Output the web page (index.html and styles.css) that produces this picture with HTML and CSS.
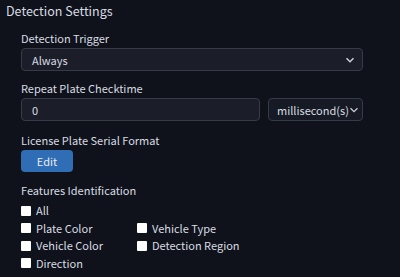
FILE: index.html
```html
<!DOCTYPE html>
<html lang="en">
<head>
<meta charset="UTF-8">
<title>Detection Settings</title>
<link rel="stylesheet" href="styles.css">
</head>
<body>

<h2 class="title">Detection Settings</h2>

<div class="section">
  <p class="label">Detection Trigger</p>
  <div class="select wide">
    <span>Always</span>
    <svg class="chev" width="10" height="6" viewBox="0 0 10 6"><path d="M1.5 1.2l3.5 3.5 3.5-3.5" fill="none" stroke="#c8ccd4" stroke-width="1.6"/></svg>
  </div>

  <p class="label">Repeat Plate Checktime</p>
  <div class="row">
    <div class="input">0</div>
    <div class="select unit">
      <span>millisecond(s)</span>
      <svg class="chev" width="10" height="6" viewBox="0 0 10 6"><path d="M1.5 1.2l3.5 3.5 3.5-3.5" fill="none" stroke="#c8ccd4" stroke-width="1.3"/></svg>
    </div>
  </div>

  <p class="label">License Plate Serial Format</p>
  <button class="btn">Edit</button>

  <p class="label features">Features Identification</p>
  <div class="checks">
    <label class="check full"><span class="box"></span>All</label>
    <label class="check"><span class="box"></span>Plate Color</label>
    <label class="check"><span class="box"></span>Vehicle Type</label>
    <label class="check"><span class="box"></span>Vehicle Color</label>
    <label class="check"><span class="box"></span>Detection Region</label>
    <label class="check full"><span class="box"></span>Direction</label>
  </div>
</div>

</body>
</html>
```

FILE: styles.css
```css
body {
  margin: 0;
  background: #0f121b;
  color: #d9dce2;
  font-family: "Noto Sans CJK SC", "Noto Sans", sans-serif;
  font-size: 11px;
  overflow: hidden;
}
.title {
  margin: 0;
  padding: 2px 0 0 6px;
  font-size: 12.5px;
  font-weight: normal;
  line-height: 17px;
}
.section {
  padding: 12px 0 0 21px;
  width: 342px;
}
.label {
  margin: 0 0 3px;
  line-height: 14px;
}
.features {
  margin-bottom: 6px;
}
.select, .input {
  box-sizing: border-box;
  height: 23px;
  background: #1b1e29;
  border: 1px solid #363b48;
  border-radius: 4px;
  display: flex;
  align-items: center;
  padding: 0 7px 0 10px;
  margin-bottom: 10px;
}
.select span {
  flex: 1;
}
.unit {
  width: 95px;
  padding: 0 3px 0 8px;
  background: #161a24;
}
.row {
  display: flex;
  gap: 8px;
  margin-bottom: 2px;
}
.row .input {
  flex: 1;
}
.btn {
  display: block;
  width: 52px;
  height: 22px;
  background: #2f6db4;
  color: #e8eef6;
  border: 0;
  border-radius: 4px;
  font-family: inherit;
  font-size: 11px;
  margin-bottom: 11px;
}
.checks {
  display: grid;
  grid-template-columns: 116px 1fr;
  row-gap: 2.5px;
}
.check {
  display: flex;
  align-items: center;
  line-height: 15px;
}
.check.full {
  grid-column: 1 / 3;
}
.box {
  width: 10px;
  height: 10px;
  background: #fff;
  border-radius: 1px;
  margin-right: 5px;
}
```
